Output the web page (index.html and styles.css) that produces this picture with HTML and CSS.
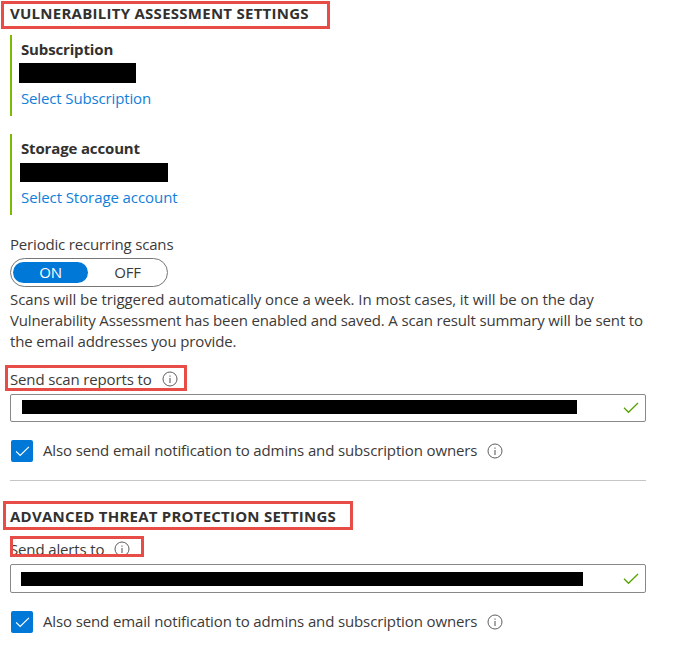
FILE: index.html
```html
<!DOCTYPE html>
<html lang="en">
<head>
    <meta charset="UTF-8">
    <meta name="viewport" content="width=device-width, initial-scale=1.0">
    <title>Server security settings</title>
    <link rel="stylesheet" href="styles.css">
</head>
<body>
    <svg class="symbols">
        <symbol id="info" viewBox="0 0 16 16">
            <circle cx="8" cy="8" r="7" fill="none" stroke="currentColor" stroke-width="1"/>
            <path d="M8 7v5M8 4.4v1.3" fill="none" stroke="currentColor" stroke-width="1.1"/>
        </symbol>
        <symbol id="check" viewBox="0 0 16 12">
            <path d="M1 5.8l4.5 4.5L15 1" fill="none" stroke="currentColor" stroke-width="1.3"/>
        </symbol>
    </svg>

    <div class="settings">
        <h2 class="title title-va">VULNERABILITY ASSESSMENT SETTINGS</h2>

        <div class="picker">
            <div class="picker-name">Subscription</div>
            <div class="redacted redacted-sub"></div>
            <a>Select Subscription</a>
        </div>

        <div class="picker">
            <div class="picker-name">Storage account</div>
            <div class="redacted redacted-storage"></div>
            <a class="link-storage">Select Storage account</a>
        </div>

        <div class="scan-label">Periodic recurring scans</div>
        <div class="toggle">
            <div class="toggle-on">ON</div>
            <div class="toggle-off">OFF</div>
        </div>
        <p class="help">
            <span class="first-line">Scans will be triggered automatically once a week. In most cases, it will be on the day</span><br>
            Vulnerability Assessment has been enabled and saved. A scan result summary will be sent to<br>
            the email addresses you provide.
        </p>

        <div class="field-label label-scan">
            <span>Send scan reports to</span>
            <svg class="info"><use href="#info"/></svg>
        </div>
        <div class="input">
            <div class="redacted"></div>
            <svg class="valid"><use href="#check"/></svg>
        </div>
        <div class="option">
            <div class="checkbox"><svg><use href="#check"/></svg></div>
            <span>Also send email notification to admins and subscription owners</span>
            <svg class="info"><use href="#info"/></svg>
        </div>

        <div class="divider"></div>

        <h2 class="title title-atp">ADVANCED THREAT PROTECTION SETTINGS</h2>
        <div class="field-label label-alerts">
            <span>Send alerts to</span>
            <svg class="info"><use href="#info"/></svg>
        </div>
        <div class="input input-alerts">
            <div class="redacted"></div>
            <svg class="valid"><use href="#check"/></svg>
        </div>
        <div class="option">
            <div class="checkbox"><svg><use href="#check"/></svg></div>
            <span>Also send email notification to admins and subscription owners</span>
            <svg class="info"><use href="#info"/></svg>
        </div>
    </div>
</body>
</html>
```
FILE: styles.css
```css
*, *::after {
    box-sizing: border-box;
}

body {
    margin: 0;
    background: #fff;
    color: #3b3a39;
    font-family: "Open Sans", "Noto Sans", sans-serif;
    font-size: 15px;
    line-height: 21px;
    letter-spacing: -0.14px;
    white-space: nowrap;
    overflow: hidden;
}

.symbols {
    display: none;
}

.settings {
    width: 636px;
    margin-left: 10px;
}

.title {
    position: relative;
    height: 28px;
    margin: 0;
    color: #323130;
    font-size: 15px;
    font-weight: 700;
    line-height: 26px;
    letter-spacing: 0.26px;
}

.title-atp {
    line-height: 28px;
    letter-spacing: 0.23px;
}

/* Red call-out frames */
.title::after,
.field-label::after {
    content: "";
    position: absolute;
    border: 3px solid #e84c47;
}

.title-va::after {
    left: -9px;
    top: 1px;
    width: 329px;
    height: 28px;
}

.title-atp::after {
    left: -7px;
    top: -1px;
    width: 350px;
    height: 29px;
}

/* Subscription and storage blocks */
.picker {
    height: 81px;
    margin: 7px 0 18px;
    padding: 4px 0 0 9px;
    border-left: 2px solid #7fba00;
}

.picker + .picker {
    margin: 0 0 19px;
}

.picker-name {
    height: 24px;
    color: #323130;
    font-weight: 700;
    letter-spacing: -0.15px;
}

.picker a {
    display: block;
    margin-top: 5px;
    color: #1080da;
}

.picker .link-storage {
    letter-spacing: -0.08px;
}

.redacted {
    height: 20px;
    background: #000;
}

.redacted-sub {
    width: 117px;
    margin-left: -2px;
}

.redacted-storage {
    width: 148px;
    height: 19px;
    margin: 1px 0 0 -1px;
}

/* On/off switch */
.scan-label {
    height: 24px;
    letter-spacing: -0.18px;
}

.toggle {
    display: flex;
    width: 158px;
    height: 29px;
    padding: 3px 2px;
    border: 1px solid #767676;
    border-radius: 15px;
}

.toggle div {
    flex: none;
    width: 75px;
    height: 21px;
    line-height: 21px;
    text-align: center;
}

.toggle .toggle-off {
    width: 79px;
}

.toggle .toggle-on {
    border-radius: 11px;
    background: #0078d7;
    color: #fff;
}

.help {
    height: 63px;
    margin: 2px 0 17px;
}

.first-line {
    letter-spacing: -0.07px;
}

/* Email fields */
.field-label {
    position: relative;
    display: flex;
    align-items: center;
    height: 21px;
}

.label-scan {
    margin-bottom: 4px;
}

.label-scan::after {
    left: -5px;
    top: -4px;
    width: 182px;
    height: 26px;
}

.label-alerts {
    height: 26px;
    margin: 6px 0 2px;
}

.label-alerts::after {
    left: 0;
    top: 0;
    width: 134px;
    height: 21px;
}

.info {
    width: 16px;
    height: 16px;
    color: #605e5c;
}

.field-label .info {
    margin: 0 0 1px 10px;
}

.input {
    display: flex;
    align-items: center;
    justify-content: space-between;
    height: 28px;
    padding: 0 6px 0 11px;
    border: 1px solid #8a8886;
    border-radius: 2px;
}

.input .redacted {
    width: 555px;
    height: 14px;
    margin-bottom: 2px;
}

.input-alerts {
    height: 29px;
    padding-left: 10px;
}

.input-alerts .redacted {
    width: 562px;
    margin-bottom: 0;
}

.valid {
    width: 16px;
    height: 12px;
    color: #57a300;
}

.option {
    display: flex;
    align-items: center;
    height: 22px;
    margin: 18px 0;
    padding-left: 1px;
    letter-spacing: -0.13px;
}

.checkbox {
    display: flex;
    align-items: center;
    justify-content: center;
    width: 22px;
    height: 22px;
    margin-right: 10px;
    border-radius: 2px;
    background: #0078d7;
    color: #fff;
}

.checkbox svg {
    width: 15px;
    height: 11px;
}

.option span {
    padding-bottom: 2px;
}

.option .info {
    margin-left: 10px;
}

.divider {
    height: 1px;
    margin-bottom: 21px;
    background: #c8c6c4;
}
```
